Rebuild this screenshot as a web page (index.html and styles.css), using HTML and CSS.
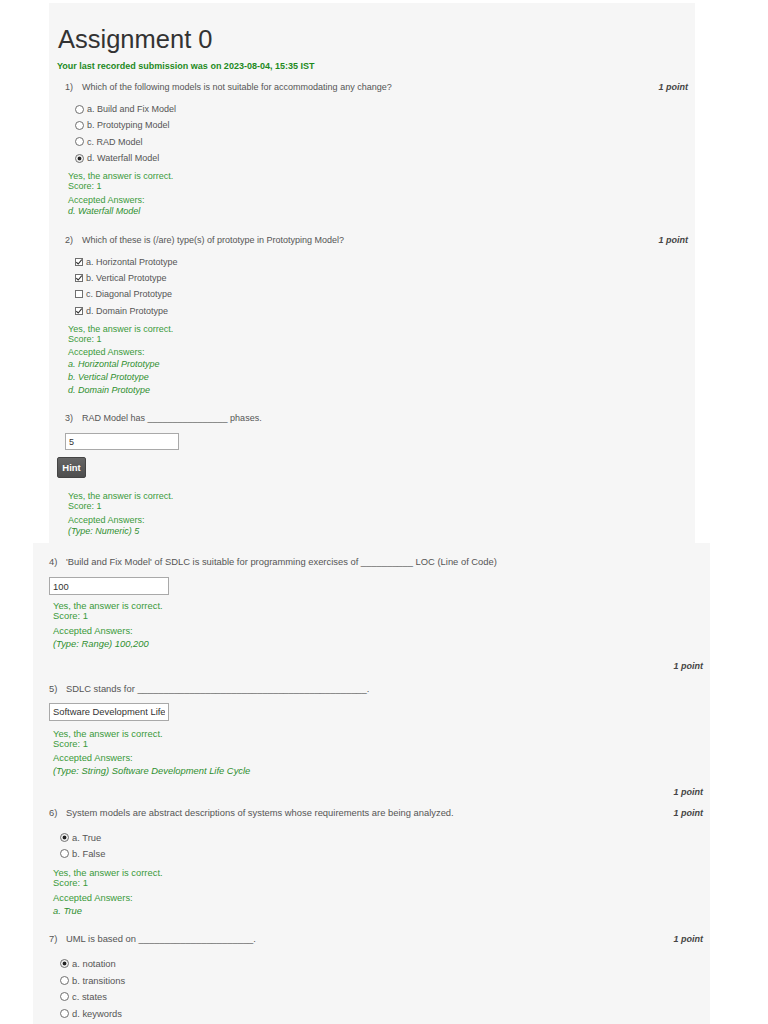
FILE: index.html
```html
<!DOCTYPE html>
<html lang="en">
<head>
<meta charset="utf-8">
<title>Assignment 0</title>
<link rel="stylesheet" href="styles.css">
</head>
<body>
<section class="panel panel-a">
  <h1 class="title">Assignment 0</h1>
  <p class="submitted">Your last recorded submission was on 2023-08-04, 15:35 IST</p>

  <div class="q q-first">
    <div class="qrow"><span class="qnum">1)</span><span class="qtext">Which of the following models is not suitable for accommodating any change?</span><span class="point">1 point</span></div>
    <div class="opts">
      <div class="opt"><span class="radio"></span>a. Build and Fix Model</div>
      <div class="opt"><span class="radio"></span>b. Prototyping Model</div>
      <div class="opt"><span class="radio"></span>c. RAD Model</div>
      <div class="opt"><span class="radio on"></span>d. Waterfall Model</div>
    </div>
    <div class="fb">
      <div class="fb-line">Yes, the answer is correct.</div>
      <div class="fb-line">Score: 1</div>
      <div class="fb-acc">Accepted Answers:</div>
      <div class="fb-answers"><div class="fb-ans">d. Waterfall Model</div></div>
    </div>
  </div>

  <div class="q">
    <div class="qrow"><span class="qnum">2)</span><span class="qtext">Which of these is (/are) type(s) of prototype in Prototyping Model?</span><span class="point">1 point</span></div>
    <div class="opts">
      <div class="opt"><span class="check"><svg viewBox="0 0 8 8" width="8" height="8"><polyline points="1.3,4.2 3.2,6 6.8,1.6" fill="none" stroke="#333" stroke-width="1.1"/></svg></span>a. Horizontal Prototype</div>
      <div class="opt"><span class="check"><svg viewBox="0 0 8 8" width="8" height="8"><polyline points="1.3,4.2 3.2,6 6.8,1.6" fill="none" stroke="#333" stroke-width="1.1"/></svg></span>b. Vertical Prototype</div>
      <div class="opt"><span class="check"></span>c. Diagonal Prototype</div>
      <div class="opt"><span class="check"><svg viewBox="0 0 8 8" width="8" height="8"><polyline points="1.3,4.2 3.2,6 6.8,1.6" fill="none" stroke="#333" stroke-width="1.1"/></svg></span>d. Domain Prototype</div>
    </div>
    <div class="fb">
      <div class="fb-line">Yes, the answer is correct.</div>
      <div class="fb-line">Score: 1</div>
      <div class="fb-acc">Accepted Answers:</div>
      <div class="fb-answers">
        <div class="fb-ans">a. Horizontal Prototype</div>
        <div class="fb-ans">b. Vertical Prototype</div>
        <div class="fb-ans">d. Domain Prototype</div>
      </div>
    </div>
  </div>

  <div class="q">
    <div class="qrow"><span class="qnum">3)</span><span class="qtext">RAD Model has ________________ phases.</span></div>
    <input class="field field-a" type="text" value="5" readonly>
    <button class="hint" type="button">Hint</button>
    <div class="fb fb-after-hint">
      <div class="fb-line">Yes, the answer is correct.</div>
      <div class="fb-line">Score: 1</div>
      <div class="fb-acc">Accepted Answers:</div>
      <div class="fb-answers"><div class="fb-ans">(Type: Numeric) 5</div></div>
    </div>
  </div>
</section>

<section class="panel panel-b">
  <div class="q q-first">
    <div class="qrow"><span class="qnum">4)</span><span class="qtext">'Build and Fix Model' of SDLC is suitable for programming exercises of __________ LOC (Line of Code)</span></div>
    <input class="field" type="text" value="100" readonly>
    <div class="fb fb-after-field">
      <div class="fb-line">Yes, the answer is correct.</div>
      <div class="fb-line">Score: 1</div>
      <div class="fb-acc">Accepted Answers:</div>
      <div class="fb-answers"><div class="fb-ans">(Type: Range) 100,200</div></div>
    </div>
    <div class="point-row point-row-4"><span class="point">1 point</span></div>
  </div>

  <div class="q q-5">
    <div class="qrow"><span class="qnum">5)</span><span class="qtext">SDLC stands for ____________________________________________.</span></div>
    <input class="field field-5" type="text" value="Software Development Life" readonly>
    <div class="fb fb-after-field5">
      <div class="fb-line">Yes, the answer is correct.</div>
      <div class="fb-line">Score: 1</div>
      <div class="fb-acc">Accepted Answers:</div>
      <div class="fb-answers"><div class="fb-ans">(Type: String) Software Development Life Cycle</div></div>
    </div>
    <div class="point-row point-row-5"><span class="point">1 point</span></div>
  </div>

  <div class="q q-6">
    <div class="qrow"><span class="qnum">6)</span><span class="qtext">System models are abstract descriptions of systems whose requirements are being analyzed.</span><span class="point">1 point</span></div>
    <div class="opts opts-b">
      <div class="opt"><span class="radio on"></span>a. True</div>
      <div class="opt"><span class="radio"></span>b. False</div>
    </div>
    <div class="fb fb-b">
      <div class="fb-line">Yes, the answer is correct.</div>
      <div class="fb-line">Score: 1</div>
      <div class="fb-acc">Accepted Answers:</div>
      <div class="fb-answers"><div class="fb-ans">a. True</div></div>
    </div>
  </div>

  <div class="q q-7">
    <div class="qrow"><span class="qnum">7)</span><span class="qtext">UML is based on ______________________.</span><span class="point">1 point</span></div>
    <div class="opts opts-b opts-7">
      <div class="opt"><span class="radio on"></span>a. notation</div>
      <div class="opt"><span class="radio"></span>b. transitions</div>
      <div class="opt"><span class="radio"></span>c. states</div>
      <div class="opt"><span class="radio"></span>d. keywords</div>
    </div>
  </div>
</section>
</body>
</html>
```

FILE: styles.css
```css
* { box-sizing: border-box; }

html, body {
  margin: 0;
  padding: 0;
  background: #ffffff;
}

body {
  font-family: "Liberation Sans", Arial, sans-serif;
  font-size: 9px;
  color: #555555;
  width: 768px;
  height: 1024px;
  overflow: hidden;
}

.panel {
  background: #f6f6f6;
  display: flex;
  flex-direction: column;
  padding-left: 8px;
  padding-right: 7px;
}

.panel-a {
  margin: 3px 0 0 49px;
  width: 646px;
  height: 540px;
  padding-top: 21px;
}

.panel-b {
  margin: 0 0 0 33px;
  width: 677px;
  height: 481px;
  padding-top: 13px;
  font-size: 9.4px;
}

.title {
  margin: 0 0 0 1px;
  font-size: 25.5px;
  font-weight: normal;
  line-height: 30px;
  color: #333333;
}

.submitted {
  margin: 6px 0 0 0;
  font-size: 9px;
  font-weight: bold;
  line-height: 12px;
  color: #1d8a1d;
}

.q {
  margin-top: 15.5px;
  padding-left: 8px;
  display: flex;
  flex-direction: column;
  align-items: flex-start;
}

.q-first { margin-top: 9px; }
.panel-b .q-first { margin-top: 0; }

.qrow {
  display: flex;
  align-items: center;
  width: 100%;
  line-height: 12px;
  color: #555555;
}

.qnum { width: 17px; flex: none; }
.qtext { flex: 1; white-space: nowrap; }

.point {
  margin-left: auto;
  font-size: 9px;
  font-weight: bold;
  font-style: italic;
  color: #444444;
}

.point-row {
  display: flex;
  width: 100%;
  line-height: 12px;
}
.point-row-4 { margin-top: 10px; }
.point-row-5 { margin-top: 8.5px; }

.opts {
  margin-top: 8px;
  padding-left: 10px;
  display: flex;
  flex-direction: column;
}
.opts-b { padding-left: 11px; margin-top: 11px; }
.opts-7 { margin-top: 10px; }
.opts-7 .opt { height: 16.5px; }

.opt {
  height: 16.3px;
  display: flex;
  align-items: center;
  color: #555555;
  white-space: nowrap;
}

.radio {
  width: 9px;
  height: 9px;
  border: 1px solid #6f6f6f;
  border-radius: 50%;
  background: #ffffff;
  margin-right: 3px;
  flex: none;
}
.radio.on {
  background: radial-gradient(circle, #222222 0 1.5px, #dcdcdc 2.2px, #ffffff 3.5px);
}

.check {
  width: 8px;
  height: 8px;
  border: 1px solid #6f6f6f;
  background: #ffffff;
  margin-right: 3px;
  flex: none;
  display: flex;
  align-items: center;
  justify-content: center;
  overflow: hidden;
}
.check svg { display: block; flex: none; }

.fb {
  margin-top: 5px;
  padding-left: 3px;
  color: #3a9a3a;
}
.panel-b .fb { padding-left: 4px; }
.fb-after-hint { margin-top: 13px; }
.fb-after-field { margin-top: 6px; }
.fb-after-field5 { margin-top: 8px; }
.fb-b { margin-top: 6.4px; }

.fb-line { line-height: 10px; white-space: nowrap; }
.fb-acc { line-height: 10px; margin-top: 3.5px; white-space: nowrap; }
.panel-b .fb-acc { margin-top: 4.5px; }
.fb-answers { margin-top: 0.5px; }
.panel-b .fb-answers { margin-top: 1px; }
.fb-ans {
  line-height: 13px;
  font-style: italic;
  color: #2f8f2f;
  white-space: nowrap;
}

.field {
  display: block;
  margin-top: 9px;
  width: 120px;
  height: 18px;
  border: 1px solid #a9a9a9;
  background: #ffffff;
  padding: 0 3px;
  font-family: "Liberation Sans", Arial, sans-serif;
  font-size: 9.4px;
  color: #333333;
  outline: none;
  border-radius: 0;
}
.field-a { width: 114px; height: 17px; font-size: 9px; }
.field-5 { margin-top: 8px; }

.hint {
  display: block;
  margin: 7px 0 0 -8px;
  width: 29px;
  height: 21px;
  padding: 0;
  border: 1px solid #444444;
  border-radius: 2px;
  background: linear-gradient(#666666, #4e4e4e);
  color: #ffffff;
  font-family: "Liberation Sans", Arial, sans-serif;
  font-size: 9.5px;
  font-weight: bold;
}

.q-5 { margin-top: 11px; }
.q-6 { margin-top: 9px; }
.q-7 { margin-top: 16.5px; }
```
